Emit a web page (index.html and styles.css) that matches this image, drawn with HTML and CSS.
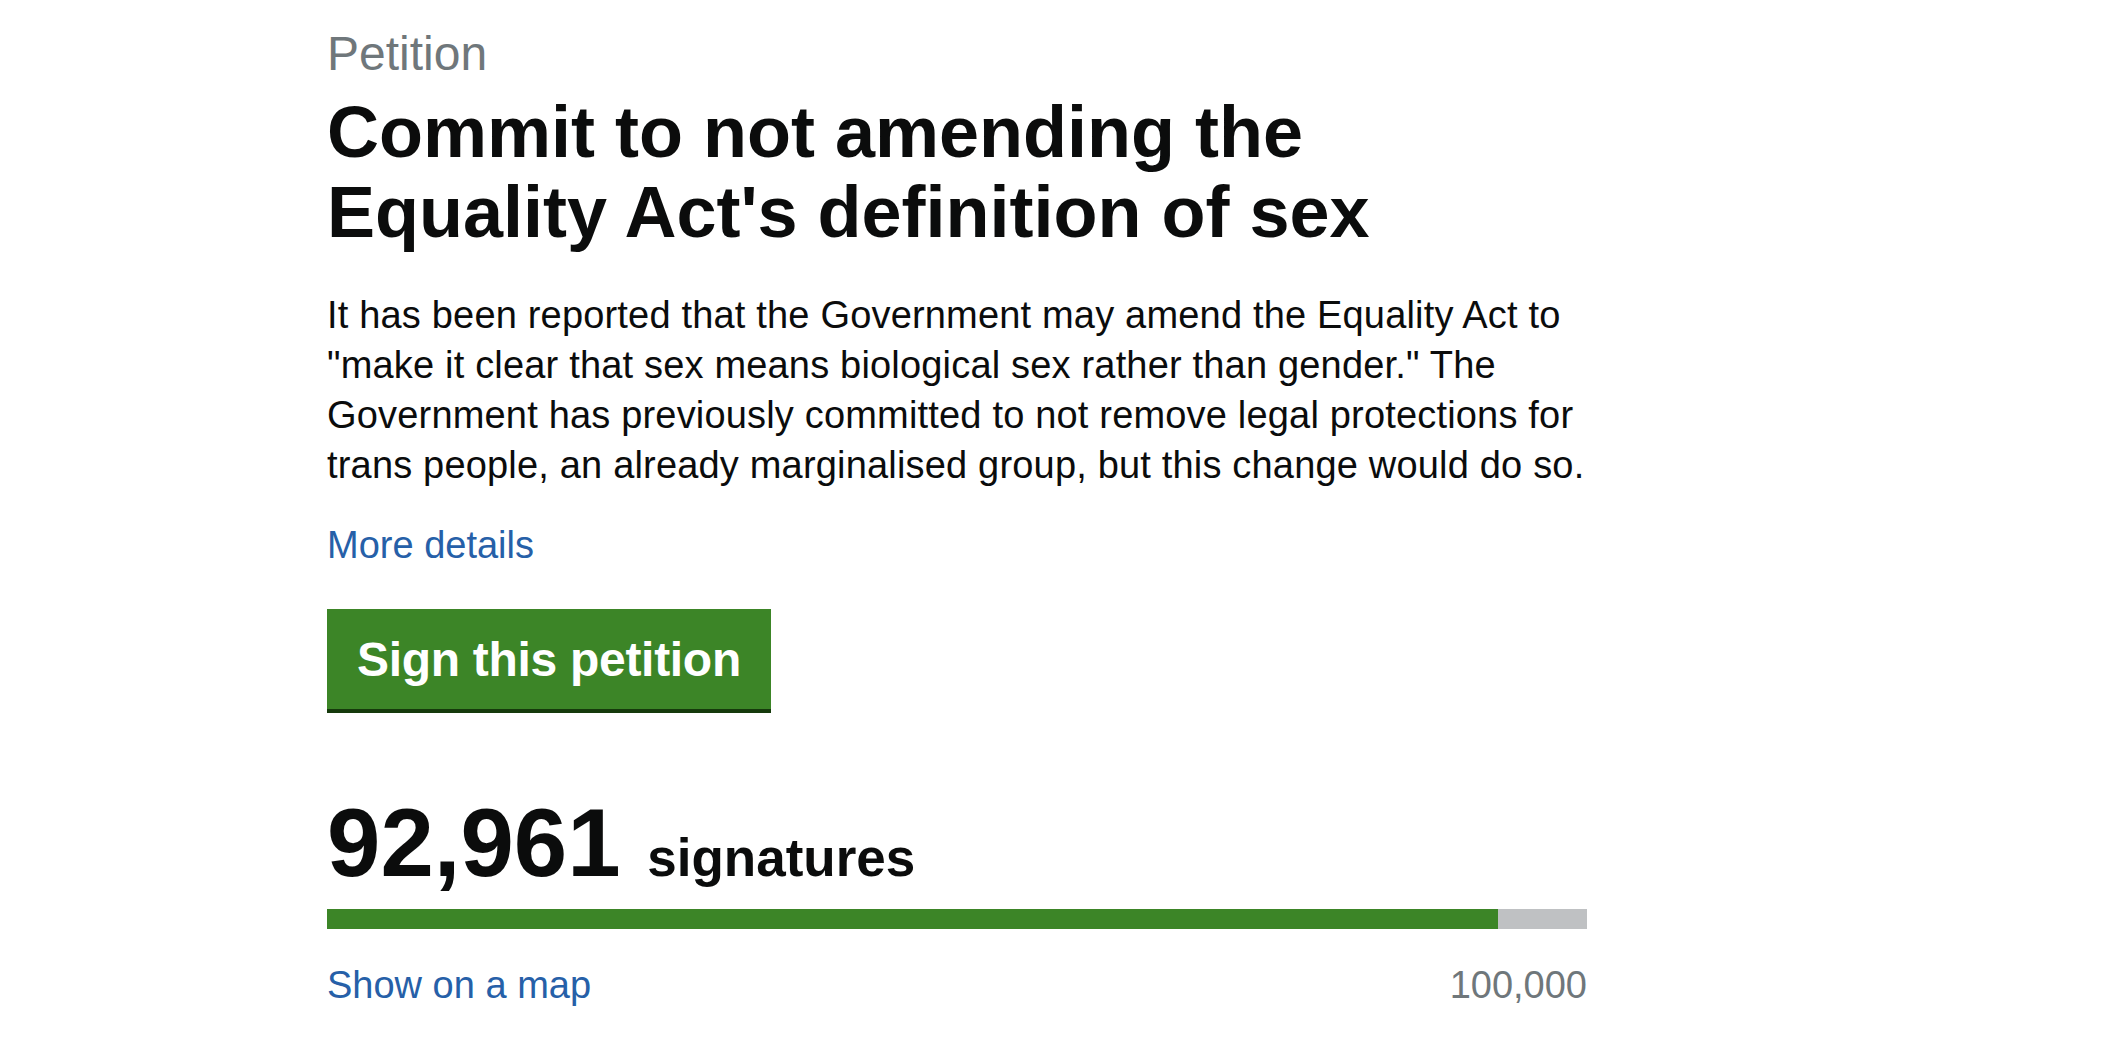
FILE: index.html
```html
<!DOCTYPE html>
<html lang="en">
<head>
<meta charset="utf-8">
<title>Commit to not amending the Equality Act's definition of sex - Petitions</title>
<link rel="stylesheet" href="styles.css">
</head>
<body>
<main class="page">
  <div class="column">
    <span class="caption">Petition</span>
    <h1 class="title">Commit to not amending the Equality Act's definition of sex</h1>
    <p class="summary">It has been reported that the Government may amend the Equality Act to "make it clear that sex means biological sex rather than gender." The Government has previously committed to not remove legal protections for trans people, an already marginalised group, but this change would do so.</p>
    <a class="link more" href="#details">More details</a>
    <a class="button" href="#sign">Sign this petition</a>
    <div class="signatures">
      <span class="count">92,961</span> <span class="label">signatures</span>
    </div>
    <div class="progress"><div class="progress-fill" style="width: 92.961%"></div></div>
    <div class="progress-meta">
      <a class="link" href="#map">Show on a map</a>
      <span class="target">100,000</span>
    </div>
  </div>
</main>
</body>
</html>
```

FILE: styles.css
```css
* { box-sizing: border-box; }
html, body { margin: 0; padding: 0; background: #ffffff; }
body {
  font-family: "Liberation Sans", Arial, Helvetica, sans-serif;
  color: #0b0c0c;
}
.page {
  padding: 24px 0 40px 327px;
}
.column {
  width: 1260px;
  display: flex;
  flex-direction: column;
  align-items: flex-start;
}
.caption {
  display: block;
  font-size: 48px;
  line-height: 60px;
  color: #6f777b;
}
.title {
  margin: 8px 0 0;
  font-size: 72px;
  line-height: 80px;
  font-weight: 700;
  color: #0b0c0c;
}
.summary {
  margin: 38px 0 0;
  font-size: 38px;
  line-height: 50px;
  letter-spacing: 0.18px;
}
.link {
  color: #2660a8;
  text-decoration: none;
  font-size: 38px;
  line-height: 50px;
}
.more {
  display: block;
  margin-top: 30px;
}
.button {
  display: block;
  margin-top: 39px;
  height: 100px;
  padding: 0 30px;
  background: #3c8527;
  box-shadow: 0 4px 0 #163a0c;
  color: #ffffff;
  font-size: 48px;
  font-weight: 700;
  letter-spacing: -0.3px;
  line-height: 101px;
  text-decoration: none;
}
.signatures {
  margin-top: 84px;
  font-size: 96px;
  line-height: 100px;
  font-weight: 700;
  white-space: nowrap;
}
.label {
  font-size: 53px;
  line-height: 1;
}
.progress {
  margin-top: 16px;
  width: 100%;
  height: 20px;
  background: #bfc1c3;
}
.progress-fill {
  height: 100%;
  background: #3c8527;
}
.progress-meta {
  margin-top: 31px;
  width: 100%;
  display: flex;
  justify-content: space-between;
  align-items: baseline;
}
.target {
  font-size: 38px;
  line-height: 50px;
  color: #6f777b;
}
```
